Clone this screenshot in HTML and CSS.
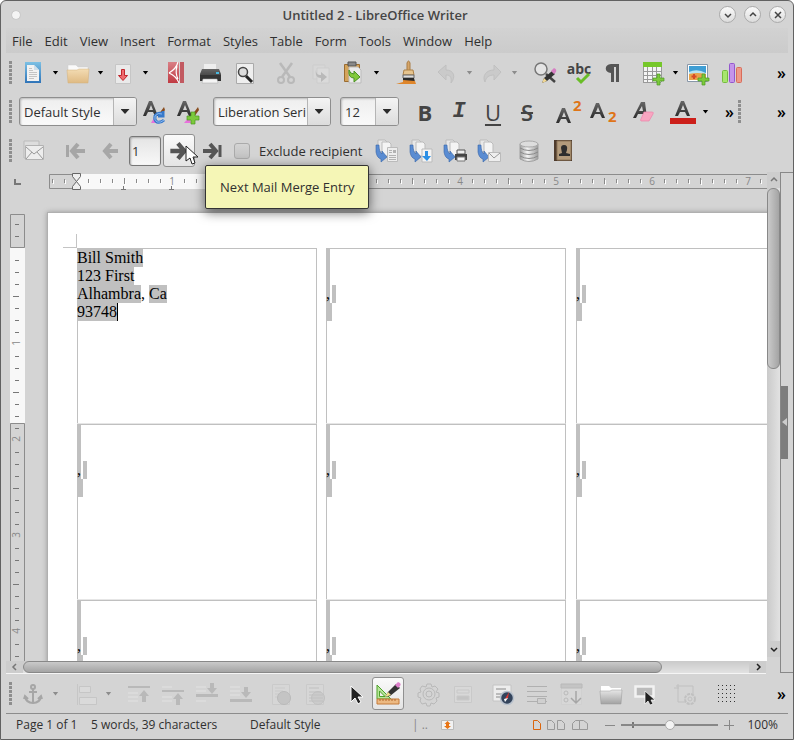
FILE: index.html
```html
<!DOCTYPE html>
<html lang="en">
<head>
<meta charset="utf-8">
<title>Untitled 2 - LibreOffice Writer</title>
<link rel="stylesheet" href="styles.css">
</head>
<body>
<svg class="defs" aria-hidden="true">
  <defs>
    <linearGradient id="blue" x2="0" y2="1"><stop offset="0" stop-color="#7cc0e4"/><stop offset="1" stop-color="#2f74b8"/></linearGradient>
    <linearGradient id="tan" x2="0" y2="1"><stop offset="0" stop-color="#f3dcb4"/><stop offset="1" stop-color="#dfba83"/></linearGradient>
    <linearGradient id="red" x2="0" y2="1"><stop offset="0" stop-color="#d98086"/><stop offset="1" stop-color="#c03a42"/></linearGradient>
    <linearGradient id="metal" x2="1" y2="0"><stop offset="0" stop-color="#9d9d9d"/><stop offset=".4" stop-color="#f4f4f4"/><stop offset="1" stop-color="#9d9d9d"/></linearGradient>
    <linearGradient id="dark" x2="0" y2="1"><stop offset="0" stop-color="#666"/><stop offset="1" stop-color="#2e2e2e"/></linearGradient>
    <linearGradient id="silver" x2="0" y2="1"><stop offset="0" stop-color="#e6e6e6"/><stop offset="1" stop-color="#a2a2a2"/></linearGradient>
    <pattern id="hticks" x="27" width="96" height="17" patternUnits="userSpaceOnUse">
      <path d="M13.5 7v4M25.5 7v4M37.5 7v4M61.5 7v4M73.5 7v4M85.5 7v4M49.5 7v5" stroke="#fff"/>
      <path d="M12.500 6v4M24.500 6v4M36.500 6v4M60.500 6v4M72.500 6v4M84.500 6v4M48.500 5v6" stroke="#8a8a8a"/>
    </pattern>
    <pattern id="vticks" y="34" width="15" height="96" patternUnits="userSpaceOnUse">
      <path d="M5 12.500h4M5 24.500h4M5 36.500h4M5 60.500h4M5 72.500h4M5 84.500h4M3 48.500h6" stroke="#777"/>
    </pattern>
    <symbol id="merge" viewBox="0 0 24 24">
      <path d="M3 1h7l2 2v10H3z" fill="#e8e8e8" stroke="#bbb"/><path d="M7 3h7l2 2v12H7z" fill="#f4f4f4" stroke="#bbb"/>
      <path d="M1 6v7q1 6 5 7v3l6-5-5-6v3Q4 13 4 6z" fill="#5a8cd2" stroke="#3865a8" stroke-width=".6"/>
    </symbol>
    <symbol id="pointer" viewBox="0 0 14 20"><path d="M1 1v15l4-3 2 6 3-1-2-6h5z"/></symbol>
  </defs>
</svg>

<div class="window">
  <header class="titlebar">
    <span class="pin"></span>
    <h1>Untitled 2 - LibreOffice Writer</h1>
    <div class="controls">
      <button aria-label="Minimize"><svg viewBox="0 0 8 8"><path d="M1 3l3 3 3-3"/></svg></button>
      <button aria-label="Maximize"><svg viewBox="0 0 8 8"><path d="M1 5l3-3 3 3"/></svg></button>
      <button aria-label="Close"><svg viewBox="0 0 8 8"><path d="M1 1l6 6M7 1l-6 6"/></svg></button>
    </div>
  </header>

  <nav class="menubar">
    <a href="#">File</a><a href="#">Edit</a><a href="#">View</a><a href="#">Insert</a><a href="#">Format</a><a href="#">Styles</a><a href="#">Table</a><a href="#">Form</a><a href="#">Tools</a><a href="#">Window</a><a href="#">Help</a>
  </nav>

  <div class="toolbar" role="toolbar" aria-label="Standard">
    <span class="grip"></span>
    <button class="tool" aria-label="New"><svg viewBox="0 0 24 24"><path d="M4 1h16v21H4z" fill="url(#blue)"/><path d="M6 4h7l5 5v11H6z" fill="#f2f2f2"/><path d="M13 4v5h5z" fill="#cfdfea"/><path d="M8 7.500h3M8 9.500h4M8 11.500h8M8 13.500h8M8 15.500h8M8 17.500h5" stroke="#c4c4c4"/></svg></button><button class="drop" aria-label="New options"></button>
    <button class="tool" aria-label="Open"><svg viewBox="0 0 24 24"><path d="M2 4h8l2 2h10v7H2z" fill="#fafafa" stroke="#ccc" stroke-width=".5"/><path d="M1 9h10l2-1h10l-1 14H2z" fill="url(#tan)" stroke="#d2b07c" stroke-width=".5"/></svg></button><button class="drop" aria-label="Open options"></button>
    <button class="tool" aria-label="Save"><svg viewBox="0 0 24 24"><path d="M4.500 3.500h15v19h-15z" fill="#eaeaea" stroke="#c6c6c6"/><path d="M10.500 8.500h3v6h3l-4.500 5-4.500-5h3z" fill="#ef6b6f" stroke="#c0272d"/></svg></button><button class="drop" aria-label="Save options"></button>
    <span class="space"></span>
    <button class="tool" aria-label="Export as PDF"><svg viewBox="0 0 24 24"><path d="M4 1h11v21H4z" fill="url(#red)"/><path d="M16 1h4v21h-4z" fill="#c25a61"/><path d="M5 12C10 9 13 5 14 1M5 12c5 2 8 5 10 10M13 5q-2 7 1 13" fill="none" stroke="#fff" stroke-width="1.200"/></svg></button>
    <button class="tool" aria-label="Print"><svg viewBox="0 0 24 24"><path d="M6 3h12v7H6z" fill="#eee"/><path d="M4 8h17l2 5v7H2v-7z" fill="url(#dark)"/><path d="M2 14h21v5H2z" fill="#343434"/><path d="M5 18h14l1 4H4z" fill="#f4f4f4" stroke="#aaa" stroke-width=".5"/><path d="M18 11h3v2h-3z" fill="#48b9df"/></svg></button>
    <button class="tool" aria-label="Print preview"><svg viewBox="0 0 24 24"><path d="M4.500 2.500h17v20h-17z" fill="#eee" stroke="#aaa"/><path d="M14 15l6 6" stroke="#222" stroke-width="3"/><circle cx="11" cy="11" r="4.500" fill="#ddd" stroke="#444" stroke-width="1.500"/></svg></button>
    <span class="space"></span>
    <button class="tool" aria-label="Cut" disabled><svg viewBox="0 0 24 24" fill="none" stroke="#a8a8a8" stroke-width="2"><path d="M6 2l10 14M18 2L8 16" stroke-width="2.500"/><circle cx="7" cy="19" r="3"/><circle cx="17" cy="19" r="3"/></svg></button>
    <button class="tool" aria-label="Copy" disabled><svg viewBox="0 0 24 24"><path d="M5 4h12v14H5z" fill="#d9d9d9" stroke="#cbcbcb"/><path d="M9 7h12v15H9z" fill="#dfdfdf" stroke="#c9c9c9"/><path d="M8 9c0 4 2 5 5 5v-3l6 5-6 5v-4c-4 0-6-3-5-8z" fill="#a8a8a8"/></svg></button>
    <button class="tool" aria-label="Paste"><svg viewBox="0 0 24 24"><path d="M2.500 3.500h15v17h-15z" fill="#d4a45c" stroke="#9b6c31"/><path d="M6 1h8v4H6z" fill="#888" stroke="#555"/><path d="M7 6h9l3 3v13H7z" fill="#eaeaea" stroke="#bbb"/><path d="M7 9q1 4 5 4v-3l6 6-6 5v-4q-6 0-5-8z" fill="#82c93c" stroke="#4b9124"/></svg></button><button class="drop" aria-label="Paste options"></button>
    <span class="space"></span>
    <button class="tool" aria-label="Clone formatting"><svg viewBox="0 0 24 24"><path d="M12 10V2q1.500-4 3 0v8z" fill="#d6a568" stroke="#a97c44"/><path d="M9 9h9l1 5H8z" fill="#e6c48e" stroke="#ad8147"/><path d="M8 14h11v3H8z" fill="#ddd" stroke="#666"/><path d="M8 17h11l1 4H8z" fill="#292929"/><path d="M8 19l12 1 1 3H1l7-2z" fill="#df862b"/></svg></button>
    <span class="space narrow"></span>
    <button class="tool" aria-label="Undo" disabled><svg viewBox="0 0 24 24"><path d="M11 4v5c8 0 10 7 5 13 1-6-1-8-5-8v5l-8-8z" fill="#c4c4c4" stroke="#b4b4b4"/></svg></button><button class="drop faded" aria-label="Undo options" disabled></button>
    <button class="tool" aria-label="Redo" disabled><svg viewBox="0 0 24 24"><path d="M14 4v5C6 9 2 15 5 21c1-5 4-7 9-7v5l7-8z" fill="#c4c4c4" stroke="#b4b4b4"/></svg></button><button class="drop faded" aria-label="Redo options" disabled></button>
    <span class="space"></span>
    <button class="tool" aria-label="Find and replace"><svg viewBox="0 0 24 24"><path d="M13 13l9 8" stroke="#444" stroke-width="2.500"/><circle cx="8" cy="8" r="6" fill="#e4e4e4" stroke="#777" stroke-width="1.500"/><path d="M9 22l2-5 8-7 3 3-8 7z" fill="#333"/><path d="M18 10l3-3q3 1 2 4l-2 2z" fill="#d77fc3"/><path d="M9 22l2-5 3 3z" fill="#f3d994"/></svg></button>
    <button class="tool" aria-label="Spelling"><svg viewBox="0 0 24 24"><text x="12" y="13" class="abc">abc</text><path d="M10 17l4 4 8-8" fill="none" stroke="#69bd27" stroke-width="3"/></svg></button>
    <button class="tool" aria-label="Formatting marks"><svg viewBox="0 0 24 24"><path d="M18 3v18h-3V6h-2v15h-3v-9C3 12 3 3 10 3z" fill="#555"/></svg></button>
    <span class="space narrow"></span>
    <button class="tool" aria-label="Insert table"><svg viewBox="0 0 24 24"><path d="M2 6h18v15H2z" fill="#f4f4f4"/><path d="M2.500 6v15M6.500 6v15M11.500 6v15M15.500 6v15M20.500 6v15M2 10.500h18M2 14.500h18M2 18.500h18M2 21.500h18" stroke="#999"/><path d="M2 1h19v5H2z" fill="#76c72a"/><path d="M16 13h3v4h4v3h-4v4h-3v-4h-4v-3h4z" fill="#7cc93c" stroke="#4c9a20" stroke-width=".7"/></svg></button><button class="drop" aria-label="Table options"></button>
    <button class="tool" aria-label="Insert image"><svg viewBox="0 0 24 24"><path d="M1.500 3.500h20v17h-20z" fill="#fff" stroke="#8897a8"/><path d="M3 5h17v7H3z" fill="#3f9ed4"/><path d="M3 11q8-4 17 1v2H3z" fill="#b5e2f2"/><path d="M3 13q8-2 17 0v6H3z" fill="#e8a34c"/><path d="M8 13v5M5.500 15.500h5" stroke="#d74a27" stroke-width="2"/><path d="M16 13h3v4h4v3h-4v4h-3v-4h-4v-3h4z" fill="#7cc93c" stroke="#4c9a20" stroke-width=".7"/></svg></button>
    <button class="tool" aria-label="Insert chart"><svg viewBox="0 0 24 24"><rect x="2.500" y="9.500" width="5" height="12" rx="1" fill="#a7e56e" stroke="#75bd3d"/><rect x="9.500" y="2.500" width="5" height="19" rx="1" fill="#c494ea" stroke="#9357cd"/><rect x="16.500" y="6.500" width="5" height="15" rx="1" fill="#ee9a89" stroke="#d96c5a"/></svg></button>
    <button class="more" aria-label="More standard tools">»</button>
  </div>

  <div class="toolbar" role="toolbar" aria-label="Formatting">
    <span class="grip"></span>
    <label class="combo wide first"><select aria-label="Paragraph style"><option>Default Style</option></select><span class="chev"></span></label>
    <button class="tool" aria-label="Update style"><svg viewBox="0 0 24 24"><path d="M1 16L7 1h3l6 15h-3l-2-4H6l-2 4zM7 10h4L9 5z" fill="url(#dark)"/><path d="M9 23l3-5 4 5z" fill="#e871dc"/><path d="M16 15l6-8 1 3-5 7z" fill="#884b1d"/><path d="M20 14q-4-2-7 2-1 4 2 6 4 1 7-2M21 11v5h-5" fill="none" stroke="#3779cb" stroke-width="3"/><path d="M20 14q-4-2-7 2-1 4 2 6 4 1 7-2" fill="none" stroke="#8db8ee"/></svg></button>
    <button class="tool" aria-label="New style"><svg viewBox="0 0 24 24"><path d="M1 16L7 1h3l6 15h-3l-2-4H6l-2 4zM7 10h4L9 5z" fill="url(#dark)"/><path d="M8 23l5-6 2 6z" fill="#e871dc"/><path d="M16 15l6-8 1 3-5 7z" fill="#884b1d"/><path d="M15 12h4v4h4v4h-4v4h-4v-4h-4v-4h4z" fill="#7cc93c" stroke="#4c9a20" stroke-width=".7"/></svg></button>
    <span class="space"></span>
    <label class="combo wide"><select aria-label="Font name"><option>Liberation Seri</option></select><span class="chev"></span></label>
    <label class="combo small"><select aria-label="Font size"><option>12</option></select><span class="chev"></span></label>
    <button class="tool glyph bold" aria-label="Bold">B</button>
    <button class="tool glyph italic" aria-label="Italic">I</button>
    <button class="tool glyph under" aria-label="Underline">U</button>
    <button class="tool glyph strike" aria-label="Strikethrough">S</button>
    <span class="space narrow"></span>
    <button class="tool" aria-label="Superscript"><svg viewBox="0 0 24 24"><path d="M1 23L7 8h3l6 15h-3l-2-4H6l-2 4zM7 17h4l-2-5z" fill="url(#dark)"/><text x="18" y="11" class="script">2</text></svg></button>
    <button class="tool" aria-label="Subscript"><svg viewBox="0 0 24 24"><path d="M1 18L7 3h3l6 15h-3l-2-4H6l-2 4zM7 12h4L9 7z" fill="url(#dark)"/><text x="19" y="22" class="script">2</text></svg></button>
    <span class="space"></span>
    <button class="tool" aria-label="Clear formatting"><svg viewBox="0 0 24 24"><path d="M2 18L10 2h4l2 16h-3l-1-4H7l-2 4zM8 11h4l-1-5z" fill="url(#dark)"/><path d="M13 12h8q2 0 1 2l-4 7h-8q-1-1 0-2z" fill="#f8a6c1" stroke="#ed82aa" stroke-width=".7"/></svg></button>
    <span class="space narrow"></span>
    <button class="tool" aria-label="Font color"><svg viewBox="0 0 24 24"><path d="M4 16L10 1h3l6 15h-3l-2-4H9l-2 4zM10 10h4l-2-5z" fill="url(#dark)"/><path d="M-1 18h26v6H-1z" fill="#cc1f1a"/></svg></button><button class="drop" aria-label="Color options"></button>
    <button class="more inline" aria-label="More formatting tools">»</button>
    <span class="grip"></span>
    <button class="more" aria-label="More tools">»</button>
  </div>

  <div class="toolbar" role="toolbar" aria-label="Mail merge">
    <span class="grip"></span>
    <button class="tool" aria-label="Mail merge wizard"><svg viewBox="0 0 24 24"><path d="M3 2h15v17H3z" fill="#ddd" stroke="#bbb"/><path d="M4.500 6.500h18v14h-18z" fill="#ededed" stroke="#b2b2b2"/><path d="M5 8l8 7 9-7M5 20l6-7M22 20l-6-7" fill="none" stroke="#999"/></svg></button>
    <span class="space"></span>
    <button class="tool" aria-label="First entry" disabled><svg viewBox="0 0 24 24" class="nav"><path d="M4.500 6v12" stroke-width="3"/><path d="M22 12H10M15 5l-6 7 6 7" stroke-width="4"/></svg></button>
    <button class="tool" aria-label="Previous entry" disabled><svg viewBox="0 0 24 24" class="nav"><path d="M21 12H9M14 5l-6 7 6 7" stroke-width="4"/></svg></button>
    <input class="entry" type="text" aria-label="Entry number" value="1">
    <div class="hovered">
      <button class="raised" aria-label="Next Mail Merge Entry"><svg viewBox="0 0 24 24" class="nav"><path d="M4 12h12M11 5l6 7-6 7" stroke-width="4"/></svg></button>
      <svg class="mouse" fill="#fff" stroke="#222"><use href="#pointer"/></svg>
      <div class="tooltip" role="tooltip">Next Mail Merge Entry</div>
    </div>
    <button class="tool" aria-label="Last entry"><svg viewBox="0 0 24 24" class="nav"><path d="M20 6v12" stroke-width="3"/><path d="M3 12h12M10 5l6 7-6 7" stroke-width="4"/></svg></button>
    <label class="check"><input type="checkbox"><span>Exclude recipient</span></label>
    <span class="space"></span>
    <button class="tool" aria-label="Edit individual documents"><svg viewBox="0 0 24 24"><use href="#merge"/><path d="M12.500 8.500h10v14h-10z" fill="#ededed" stroke="#bbb"/><path d="M14 11.500h3M14 13.500h3M14 16.500h7M14 18.500h7M14 20.500h7" stroke="#b2b2b2"/><path d="M18 11h3v3h-3z" fill="#b2b2b2"/></svg></button>
    <button class="tool" aria-label="Save merged documents"><svg viewBox="0 0 24 24"><use href="#merge"/><path d="M13 10h10v13H13z" fill="#f3f3f3" stroke="#bbb"/><path d="M16 12h3v5h3l-4 5-5-5h3z" fill="#2b8fe5"/></svg></button>
    <button class="tool" aria-label="Print merged documents"><svg viewBox="0 0 24 24"><use href="#merge"/><path d="M14 11h8v4h-8z" fill="#eee" stroke="#555"/><path d="M12 15h12v6H12z" fill="#444"/><path d="M14 18h8v4h-8z" fill="#f5f5f5" stroke="#777"/></svg></button>
    <button class="tool" aria-label="Email merged documents"><svg viewBox="0 0 24 24"><use href="#merge"/><path d="M11.500 13.500h12v9h-12z" fill="#eee" stroke="#bbb"/><path d="M12 14l5 5 6-5" fill="none" stroke="#999"/></svg></button>
    <span class="space narrow"></span>
    <button class="tool" aria-label="Data sources"><svg viewBox="0 0 24 24"><path d="M3 5v15q9 5 18 0V5z" fill="url(#metal)" stroke="#a0a0a0"/><path d="M3 9q9 5 18 0M3 13q9 5 18 0M3 17q9 5 18 0" fill="none" stroke="#8a8a8a"/><ellipse cx="12" cy="5" rx="9" ry="3" fill="#ddd" stroke="#aaa"/></svg></button>
    <button class="tool" aria-label="Address book"><svg viewBox="0 0 24 24"><path d="M3 1h18v21H3z" fill="#4e3b2c"/><path d="M6 2h14v19H6z" fill="#b39b7c" stroke="#8e7759"/><path d="M10 9q0-3 3-3 4 0 3 5l-1 3 4 1v2H8v-2l3-1z" fill="#2e2e2e"/></svg></button>
  </div>

  <main class="workspace">
    <div class="editor">
      <div class="ruler-row">
        <span class="tabstop"></span>
        <svg class="hruler" aria-label="Horizontal ruler">
          <rect x="27" y="1" width="241" height="15" fill="#f8f8f8"/>
          <path d="M27 1.500H.5v14H27" fill="none" stroke="#8c8c8c"/>
          <rect x="268" y="1" width="100%" height="1" fill="#8c8c8c"/><rect x="268" y="15" width="100%" height="1" fill="#8c8c8c"/>
          <rect x="1" width="100%" height="17" fill="url(#hticks)"/>
          <g class="num"><text x="123" y="12">1</text><text x="411" y="12">4</text><text x="507" y="12">5</text><text x="603" y="12">6</text><text x="699" y="12">7</text></g>
          <path d="M23.500.5h8v3l-4 5-4-5zM23.500 16.500h8v-3l-4-5-4 5z" fill="#eee" stroke="#666"/>
          <path d="M72 16.500h5M74.500 13v3M120 16.500h5M122.500 13v3" stroke="#777"/>
        </svg>
      </div>
      <div class="doc-row">
        <svg class="vruler" aria-label="Vertical ruler">
          <rect y="34" width="15" height="175" fill="#f8f8f8"/>
          <path d="M.5.500h14v33H.500zM.5 600V209.500h14V600" fill="none" stroke="#8c8c8c"/>
          <rect y="1" width="15" height="100%" fill="url(#vticks)"/>
          <g class="num"><text transform="translate(10 129) rotate(-90)">1</text><text transform="translate(10 225) rotate(-90)">2</text><text transform="translate(10 321) rotate(-90)">3</text><text transform="translate(10 417) rotate(-90)">4</text></g>
        </svg>
        <div class="canvas">
          <article class="page">
            <span class="crop"></span>
            <div class="labels">
              <section class="label filled"><p><b>Bill Smith</b></p><p><b>123 First</b></p><p><b>Alhambra</b>, <b>Ca</b></p><p><b class="caret">93748</b></p></section>
              <section class="label"><p><i></i></p><p><i></i></p><p><b>,</b><i class="next"></i></p><p><i class="last"></i></p></section>
              <section class="label"><p><i></i></p><p><i></i></p><p><b>,</b><i class="next"></i></p><p><i class="last"></i></p></section>
              <section class="label"><p><i></i></p><p><i></i></p><p><b>,</b><i class="next"></i></p><p><i class="last"></i></p></section>
              <section class="label"><p><i></i></p><p><i></i></p><p><b>,</b><i class="next"></i></p><p><i class="last"></i></p></section>
              <section class="label"><p><i></i></p><p><i></i></p><p><b>,</b><i class="next"></i></p><p><i class="last"></i></p></section>
              <section class="label"><p><i></i></p><p><i></i></p><p><b>,</b><i class="next"></i></p><p><i class="last"></i></p></section>
              <section class="label"><p><i></i></p><p><i></i></p><p><b>,</b><i class="next"></i></p><p><i class="last"></i></p></section>
              <section class="label"><p><i></i></p><p><i></i></p><p><b>,</b><i class="next"></i></p><p><i class="last"></i></p></section>
            </div>
          </article>
        </div>
      </div>
    </div>
    <div class="vscroll">
      <button aria-label="Scroll up"><svg viewBox="0 0 8 8"><path d="M1 5l3-3 3 3"/></svg></button>
      <div class="track"><span class="thumb"></span></div>
      <button class="strong" aria-label="Scroll down"><svg viewBox="0 0 8 8"><path d="M1 3l3 3 3-3"/></svg></button>
    </div>
    <aside class="sidebar"><button aria-label="Show sidebar"><svg viewBox="0 0 7 9"><path d="M6 0v8L1 4z" fill="#ccc"/></svg></button></aside>
  </main>
  <div class="hscroll">
    <button aria-label="Scroll left"><svg viewBox="0 0 8 8"><path d="M5 1L2 4l3 3"/></svg></button>
    <div class="track"><span class="thumb"></span></div>
    <button class="strong" aria-label="Scroll right"><svg viewBox="0 0 8 8"><path d="M3 1l3 3-3 3"/></svg></button>
  </div>

  <div class="toolbar" role="toolbar" aria-label="Form design">
    <span class="grip"></span>
    <button class="tool" aria-label="Anchor" disabled><svg viewBox="0 0 24 24" fill="none" stroke="#888" stroke-width="2"><circle cx="12" cy="5" r="2"/><path d="M12 7v14M8 10h8M4 14q1 7 8 7t8-7M3 17l1-3 3 3M21 17l-1-3-3 3"/></svg></button><button class="drop faded" aria-label="Anchor options" disabled></button>
    <span class="space"></span>
    <button class="tool" aria-label="Align" disabled><svg viewBox="0 0 24 24" fill="#dedede" stroke="#bdbdbd"><path d="M3.500 2v21M5.500 4.500h11v6h-11zM5.500 15.500h17v7h-17z"/></svg></button><button class="drop faded" aria-label="Align options" disabled></button>
    <span class="space"></span>
    <button class="tool" aria-label="Bring to front" disabled><svg viewBox="0 0 24 24" fill="#a8a8a8"><path d="M1 4h22v2H1zM17 8l5 6h-3v6h-4v-6h-3z"/><path d="M1 11h10M1 15h10M1 19h10" stroke="#eee"/></svg></button>
    <button class="tool" aria-label="Forward one" disabled><svg viewBox="0 0 24 24" fill="#a8a8a8"><path d="M1 8h22v2H1zM17 11l5 6h-3v6h-4v-6h-3z"/><path d="M1 5h10M1 15h10M1 19h10" stroke="#eee"/></svg></button>
    <button class="tool" aria-label="Back one" disabled><svg viewBox="0 0 24 24" fill="#a8a8a8"><path d="M1 12h22v3H1zM15 1h4v5h3l-5 6-5-6h3z"/><path d="M1 5h10M1 9h10M1 19h10" stroke="#eee"/></svg></button>
    <button class="tool" aria-label="Send to back" disabled><svg viewBox="0 0 24 24" fill="#a8a8a8"><path d="M1 17h22v3H1zM15 5h4v5h3l-5 6-5-6h3z"/><path d="M1 5h10M1 9h10M1 13h10" stroke="#eee"/></svg></button>
    <span class="space narrow"></span>
    <button class="tool" aria-label="To foreground" disabled><svg viewBox="0 0 24 24"><path d="M3.500 2.500h17v20h-17z" fill="#d8d8d8" stroke="#c4c4c4"/><path d="M6 6h10M6 9h8M6 12h5M6 15h4" stroke="#c4c4c4"/><circle cx="15" cy="16" r="6.500" fill="#bbb" stroke="#a8a8a8"/></svg></button>
    <button class="tool" aria-label="To background" disabled><svg viewBox="0 0 24 24"><path d="M3.500 2.500h17v20h-17z" fill="#d8d8d8" stroke="#c4c4c4"/><circle cx="15" cy="16" r="6.500" fill="#c6c6c6" stroke="#b4b4b4"/><path d="M6 6h10M6 10h12M6 13h14M6 16h14M6 19h14" stroke="#b4b4b4"/></svg></button>
    <span class="space narrow"></span>
    <button class="tool" aria-label="Select"><svg viewBox="0 0 24 24"><path d="M8 4v16l4-4 3 6 3-2-3-5h5z" fill="#222" stroke="#fff"/></svg></button>
    <button class="raised" aria-label="Design mode"><svg viewBox="0 0 26 26"><path d="M2 4v14h14z" fill="#b8e59a" stroke="#4ea32a"/><path d="M4.500 10v5.500H10z" fill="#eee" stroke="#4ea32a"/><path d="M2 18h22v5H2z" fill="#ecb982" stroke="#c47b3b"/><path d="M5 18v2M8 18v2M11 18v2M14 18v2M17 18v2M20 18v2" stroke="#b36b2e"/><path d="M10 16l3-5 8-8 4 4-10 8z" fill="#333"/><path d="M20 4l3-3q4 1 2 4l-2 2z" fill="#dd80cb"/><path d="M10 16l3-5 3 3z" fill="#f1e08c"/></svg></button>
    <span class="space"></span>
    <button class="tool" aria-label="Control" disabled><svg viewBox="0 0 24 24" fill="none" stroke="#a8a8a8"><path d="M10 2h4l1 3 3-1 3 3-2 3 3 1v4l-3 1 1 3-3 3-3-1-1 3h-3l-1-3-4 1-2-3 1-3-3-1v-4l3-1-1-3 2-3 4 1z"/><circle cx="12" cy="12" r="6"/><circle cx="12" cy="12" r="3"/></svg></button>
    <button class="tool" aria-label="Form" disabled><svg viewBox="0 0 24 24" fill="#dcdcdc" stroke="#c2c2c2"><path d="M3.500 4.500h17v16h-17zM6 8h12v3H6z"/><path d="M6 14h12v4H6z" fill="#bbb"/></svg></button>
    <span class="space narrow"></span>
    <button class="tool" aria-label="Form navigator"><svg viewBox="0 0 24 24"><path d="M2 3h18v16H2z" fill="#ededed" stroke="#c4c4c4"/><path d="M5 7h10M5 12h6M5 15h6" stroke="#bbb" stroke-width="2"/><circle cx="16" cy="16" r="6.500" fill="#34445c" stroke="#b9c2cd" stroke-width="1.500"/><path d="M18 10l-4 7 3-1z" fill="#e33630"/><path d="M14 20l3-4-4 1z" fill="#fff"/></svg></button>
    <button class="tool" aria-label="Add field" disabled><svg viewBox="0 0 24 24" stroke="#999" fill="#ccc"><path d="M2 4.500h20M2 9.500h20M2 14.500h20M2 19.500h20"/><path d="M12.500 16.500h8v5h-8z"/></svg></button>
    <button class="tool" aria-label="Activation order" disabled><svg viewBox="0 0 24 24" fill="none" stroke="#a8a8a8"><path d="M2.500 2.500h20v20h-20z" fill="#dadada" stroke="#cfcfcf"/><path d="M2 2h21v4H2z" fill="#bbb"/><circle cx="7" cy="11" r="2"/><circle cx="7" cy="18" r="2"/><path d="M17 9v12M12 16l5 5 5-5" stroke="#888" stroke-width="1.500"/></svg></button>
    <span class="space narrow"></span>
    <button class="tool" aria-label="Open in design mode"><svg viewBox="0 0 24 24"><path d="M2 4h8l2 2h10v5H2z" fill="#fff"/><path d="M1 9h10l2-1h10l-1 14H2z" fill="url(#silver)" stroke="#999" stroke-width=".5"/></svg></button>
    <button class="tool" aria-label="Control focus"><svg viewBox="0 0 24 24"><path d="M2.500 4.500h18v10h-18z" fill="#bbb" stroke="#f2f2f2" stroke-width="2.500"/><path d="M12 9v13l3-3 2 4 3-1-2-4h4z" fill="#222" stroke="#fff" stroke-width=".7"/></svg></button>
    <span class="space narrow"></span>
    <button class="tool" aria-label="Wizards" disabled><svg viewBox="0 0 24 24" fill="none" stroke="#b4b4b4"><path d="M3 4h17v8M5 2v18h8M1 6h5"/><circle cx="17" cy="17" r="5" stroke-width="2" stroke-dasharray="3 1"/><circle cx="17" cy="17" r="2"/></svg></button>
    <span class="space"></span>
    <button class="tool" aria-label="Display grid"><svg viewBox="0 0 24 24"><path d="M3 3.500h18M3 7.500h18M3 11.500h18M3 15.500h18M3 19.500h18" stroke="#333" stroke-dasharray="1 3"/></svg></button>
    <button class="more" aria-label="More form tools">»</button>
  </div>

  <footer class="statusbar">
    <span class="pages">Page 1 of 1</span>
    <span class="words">5 words, 39 characters</span>
    <span class="style">Default Style</span>
    <span class="mode">| ..</span>
    <svg class="modified" viewBox="0 0 13 10"><path d="M.5.500h12v9H.500z" fill="#f2f2f2" stroke="#bbb"/><path d="M6.500 1l3 3H8v2h2L6.500 9 3 6h2V4H3.500z" fill="#e87516"/></svg>
    <svg class="views" viewBox="0 0 57 10" fill="none" stroke="#999"><path d="M1.500.500h4l3 3v6h-7z" stroke="#db650c"/><path d="M15.500.500h4l3 3v6h-7zM25.500.500h4l3 3v6h-7zM47.500 9.500h-7v-6l3-3h4zM47.500.500h4l4 3v6h-8z"/></svg>
    <button class="zoom" aria-label="Zoom out"><svg viewBox="0 0 10 10"><path d="M0 5.500h10"/></svg></button>
    <input class="slider" type="range" aria-label="Zoom" min="0" max="100" value="50">
    <button class="zoom" aria-label="Zoom in"><svg viewBox="0 0 10 10"><path d="M0 5.500h10M5.500 0v10"/></svg></button>
    <span class="percent">100%</span>
  </footer>
</div>
</body>
</html>
```
FILE: styles.css
```css
* { box-sizing: border-box; }

body {
  margin: 0;
  background: #fff;
  color: #303030;
  font: 13px/18px "Open Sans", "Noto Sans", sans-serif;
}

button, select, input { font: inherit; color: inherit; margin: 0; }
button { padding: 0; border: 0; background: none; }
a { color: inherit; text-decoration: none; }
svg { display: block; }
.defs { position: absolute; width: 0; height: 0; }

.window {
  display: flex;
  flex-direction: column;
  height: 100vh;
  padding: 0 5px;
  overflow: hidden;
  border: 1px solid #626262;
  border-radius: 6px 6px 0 0;
  background: #d4d4d4;
}

/* Title and menu */
.titlebar {
  display: grid;
  grid-template-columns: 80px 1fr 80px;
  align-items: center;
  height: 27px;
  flex: none;
}
.titlebar h1 { margin: 0 44px 0 0; text-align: center; font-size: 13px; font-weight: 600; color: #454545; }
.pin { width: 8px; height: 8px; margin-left: 6px; border-radius: 50%; background: #f4f4f4; box-shadow: 0 0 1px #888; }
.controls { display: flex; justify-content: flex-end; gap: 8px; padding-right: 2px; }
.controls button { display: grid; place-items: center; width: 17px; height: 17px; border: 1px solid #aaa; border-radius: 50%; background: linear-gradient(#fafafa, #dcdcdc); }
.controls svg { width: 8px; height: 8px; fill: none; stroke: #444; stroke-width: 1.5; }

.menubar {
  display: flex;
  align-items: center;
  gap: 12px;
  height: 25px;
  padding-left: 6px;
  flex: none;
  background: linear-gradient(#d2d2d2, #cbcbcb);
}

/* Toolbars */
.toolbar { display: flex; align-items: center; height: 39px; padding: 0 2px 0 3px; flex: none; }
.grip { width: 3px; height: 24px; margin-right: 4px; flex: none; background: repeating-linear-gradient(#8e8e8e 0 3px, transparent 3px 4px); }
.tool { display: grid; place-items: center; width: 34px; height: 32px; flex: none; }
.tool svg { width: 24px; height: 24px; overflow: visible; }
.tool:disabled svg { opacity: .6; }
.drop { width: 11px; height: 32px; flex: none; display: grid; place-items: center; }
.drop::before { content: ""; width: 6px; height: 4px; background: #000; clip-path: polygon(0 0, 100% 0, 50% 100%); }
.faded::before { background: #8c8c8c; }
.space { width: 8px; flex: none; }
.narrow { width: 6px; }
.more { margin-left: auto; font-size: 16px; font-weight: 600; line-height: 20px; color: #000; }
.more.inline { margin: 0 4px 0 14px; }
.abc { font: 700 14px "Open Sans", sans-serif; fill: #444; text-anchor: middle; }
.script { font: 700 15px "Open Sans", sans-serif; fill: #df7518; }
.nav { fill: none; stroke: #565656; }
.tool:disabled .nav { stroke: #888; }

.glyph { display: block; font-size: 22px; line-height: 30px; font-weight: 600; color: #444; white-space: nowrap; }
.bold { font-weight: 700; }
.italic { font-family: "Liberation Mono", monospace; font-style: italic; font-weight: 700; }
.under { font-weight: 400; text-decoration: underline; text-decoration-thickness: 2px; text-underline-offset: 3px; }
.strike { text-decoration: line-through; text-decoration-thickness: 2px; }

.combo {
  display: flex;
  height: 29px;
  margin-right: 9px;
  flex: none;
  border: 1px solid #8e8e8e;
  border-radius: 3px;
  background: linear-gradient(#eee, #fafafa);
  box-shadow: inset 1px 1px 2px #bbb;
}
.combo.wide { width: 118px; }
.combo.small { width: 59px; }
.combo.first { margin: 0 0 0 3px; }
.combo select { flex: 1; min-width: 0; padding: 0 0 0 4px; border: 0; background: none; appearance: none; overflow: hidden; text-overflow: clip; }
.chev { display: grid; place-items: center; width: 23px; border-left: 1px solid #b5b5b5; background: linear-gradient(#f4f4f4, #dcdcdc); border-radius: 0 2px 2px 0; }
.chev::before { content: ""; width: 9px; height: 5px; background: #2b2b2b; clip-path: polygon(0 0, 100% 0, 50% 100%); }

.entry { width: 32px; height: 30px; margin-left: 3px; padding: 0 2px; flex: none; border: 1px solid #777; border-radius: 3px; background: linear-gradient(#e4e4e4, #f8f8f8); box-shadow: inset 1px 1px 2px #aaa; }
.hovered { position: relative; margin-left: 2px; }
.raised { display: grid; place-items: center; width: 32px; height: 33px; flex: none; border: 1px solid #909090; border-radius: 3px; background: linear-gradient(#fafafa, #e4e4e4); }
.raised svg { width: 26px; height: 26px; }
.mouse { position: absolute; left: 22px; top: 11px; width: 14px; height: 20px; z-index: 3; }
.tooltip {
  position: absolute;
  left: 42px;
  top: 31px;
  z-index: 2;
  padding: 12px 14px;
  border: 1px solid #333;
  border-radius: 2px;
  background: #f5f6b6;
  box-shadow: 0 3px 12px rgba(0, 0, 0, .6);
  line-height: 18px;
  white-space: nowrap;
}
.check { display: flex; align-items: center; gap: 9px; margin: 0 0 0 5px; flex: none; }
.check input { appearance: none; width: 16px; height: 16px; border: 1px solid #aaa; border-radius: 3px; background: linear-gradient(#d4d4d4, #c2c2c2); }

/* Document area */
.workspace { display: flex; flex: 1; min-height: 0; }
.editor { display: flex; flex-direction: column; flex: 1; min-width: 0; }
.ruler-row { display: flex; align-items: center; height: 23px; flex: none; }
.tabstop { width: 7px; height: 6px; margin: 0 28px 0 8px; border: solid #777; border-width: 0 0 2px 2px; flex: none; }
.hruler { flex: 1; width: 0; height: 17px; }
.num { font: 10px "Open Sans", sans-serif; fill: #888; text-anchor: middle; }
.doc-row { display: flex; flex: 1; min-height: 0; padding-left: 4px; }
.vruler { width: 15px; height: auto; margin-top: 21px; flex: none; }
.canvas { flex: 1; min-width: 0; overflow: hidden; padding: 19px 0 0 22px; }
.page { position: relative; width: 816px; height: 1056px; padding: 35px 0 0 29px; border: 1px solid #b0b0b0; background: #fff; box-shadow: 0 0 5px #999; }
.crop { position: absolute; left: 15px; top: 21px; width: 14px; height: 14px; border: solid #c4c4c4; border-width: 0 1px 1px 0; }
.labels { display: grid; grid-template-columns: 249px 250px 240px; grid-auto-rows: 176px; }
.label { width: 240px; border: 1px solid #c0c0c0; border-left: 0; border-bottom-color: #e6e6e6; background: linear-gradient(#c0c0c0, #c0c0c0) 0 0 / 1px 100% no-repeat; font: 16px/18px "Liberation Serif", serif; color: #000; }
.label p { display: flex; height: 18px; margin: 0; white-space: pre; }
.label b { font-weight: 400; background: #c0c0c0; }
.label i { width: 4px; background: #c0c0c0; }
.label .next { margin-left: 2px; }
.label .last { width: 6px; }
.label .caret { border-right: 1px solid #000; }

/* Scrollbars */
.vscroll { display: flex; flex-direction: column; width: 13px; flex: none; padding: 2px 0 4px; }
.vscroll button, .hscroll button { display: grid; place-items: center; width: 13px; height: 16px; flex: none; background: #cdcdcd; }
.vscroll svg, .hscroll svg { width: 8px; height: 8px; fill: none; stroke: #777; stroke-width: 1.5; }
.vscroll .strong svg, .hscroll .strong svg { stroke: #222; }
.track { flex: 1; background: linear-gradient(90deg, #cacaca, #e2e2e2); }
.vscroll .thumb { display: block; width: 100%; height: 40%; border: 1px solid #888; border-radius: 6px; background: linear-gradient(90deg, #cacaca, #a4a4a4); }
.sidebar { display: flex; align-items: center; width: 13px; flex: none; margin: 2px -5px -12px 0; border: solid #888; border-width: 1px 0 1px 1px; }
.sidebar button { display: grid; place-items: center; width: 7px; height: 73px; background: #7d7d7d; }
.sidebar svg { width: 7px; height: 9px; }
.hscroll { display: flex; height: 13px; margin-right: 22px; flex: none; border-bottom: 1px solid #f5f5f5; }
.hscroll button { width: 17px; height: 12px; }
.hscroll .track { background: linear-gradient(#cacaca, #e2e2e2); }
.hscroll .thumb { display: block; width: 88%; height: 100%; border: 1px solid #888; border-radius: 6px; background: linear-gradient(#cacaca, #a4a4a4); }

/* Status bar */
.statusbar { display: flex; align-items: center; height: 26px; padding: 0 10px 4px; flex: none; border-top: 1px solid #8c8c8c; font-size: 12px; white-space: nowrap; }
.pages { width: 75px; }
.words { width: 159px; }
.style { width: 162px; }
.mode { width: 29px; color: #888; }
.modified { width: 13px; height: 10px; }
.views { width: 57px; height: 10px; margin: 0 16px 0 auto; }
.zoom svg { width: 10px; height: 10px; stroke: #888; }
.slider { width: 97px; height: 14px; margin: 0 6px; appearance: none; background: linear-gradient(#888, #888) center / 100% 2px no-repeat, linear-gradient(#777, #777) 11px center / 2px 6px no-repeat; }
.slider::-webkit-slider-thumb { appearance: none; width: 10px; height: 10px; border: 1px solid #aaa; border-radius: 50%; background: #f4f4f4; }
.percent { margin-left: 13px; }
```
